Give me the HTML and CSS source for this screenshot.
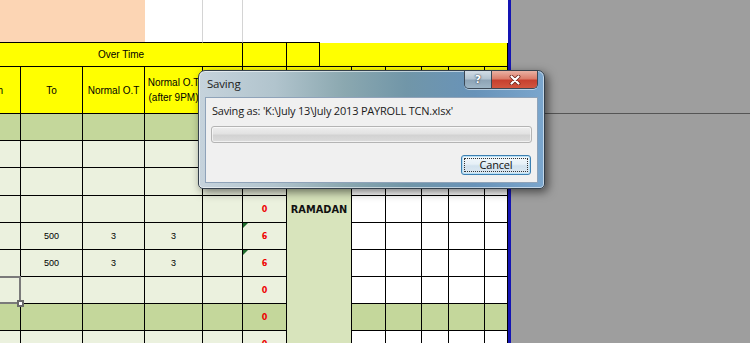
FILE: index.html
```html
<!DOCTYPE html>
<html>
<head>
<meta charset="utf-8">
<title>Saving</title>
<link rel="stylesheet" href="styles.css">
</head>
<body>
<div class="screen">
  <div class="sheet">
    <!-- row A -->
    <div class="c pe s3 nbr"></div>
    <div class="c wh gr"></div>
    <div class="c wh gr"></div>
    <div class="c wh s2 nbr"></div>
    <div class="c wh s6 nb"></div>
    <!-- row B -->
    <div class="c ye s5 ot">Over Time</div>
    <div class="c ye"></div>
    <div class="c ye"></div>
    <div class="c ye s6"></div>
    <!-- row C header -->
    <div class="c ye hd from"><span>From</span></div>
    <div class="c ye hd">To</div>
    <div class="c ye hd">Normal O.T</div>
    <div class="c ye hd two">Normal O.T<br>(after 9PM)</div>
    <div class="c ye hd"></div>
    <div class="c ye hd"></div>
    <div class="c ye hd s2"></div>
    <div class="c ye hd"></div>
    <div class="c ye hd"></div>
    <div class="c ye hd"></div>
    <div class="c ye hd"></div>
    <div class="c ye hd"></div>
    <!-- D1 dark -->
    <div class="c dk"></div><div class="c dk"></div><div class="c dk"></div><div class="c dk"></div><div class="c dk"></div><div class="c dk"></div>
    <div class="c dk s2"></div>
    <div class="c dk"></div><div class="c dk"></div><div class="c dk"></div><div class="c dk"></div><div class="c dk"></div>
    <!-- D2 -->
    <div class="c lt"></div><div class="c lt"></div><div class="c lt"></div><div class="c lt"></div><div class="c lt"></div><div class="c lt"></div>
    <div class="c ra s2 nbb"></div>
    <div class="c wh"></div><div class="c wh"></div><div class="c wh"></div><div class="c wh"></div><div class="c wh"></div>
    <!-- D3 -->
    <div class="c lt"></div><div class="c lt"></div><div class="c lt"></div><div class="c lt"></div><div class="c lt"></div><div class="c lt"></div>
    <div class="c ra s2 nbb"></div>
    <div class="c wh"></div><div class="c wh"></div><div class="c wh"></div><div class="c wh"></div><div class="c wh"></div>
    <!-- D4 -->
    <div class="c lt"></div><div class="c lt"></div><div class="c lt"></div><div class="c lt"></div><div class="c lt"></div>
    <div class="c lt red">0</div>
    <div class="c ra s2 r6 rama">RAMADAN</div>
    <div class="c wh"></div><div class="c wh"></div><div class="c wh"></div><div class="c wh"></div><div class="c wh"></div>
    <!-- D5 -->
    <div class="c lt"></div><div class="c lt">500</div><div class="c lt">3</div><div class="c lt">3</div><div class="c lt"></div>
    <div class="c lt red tri">6</div>
    <div class="c wh"></div><div class="c wh"></div><div class="c wh"></div><div class="c wh"></div><div class="c wh"></div>
    <!-- D6 -->
    <div class="c lt"></div><div class="c lt">500</div><div class="c lt">3</div><div class="c lt">3</div><div class="c lt"></div>
    <div class="c lt red tri">6</div>
    <div class="c wh"></div><div class="c wh"></div><div class="c wh"></div><div class="c wh"></div><div class="c wh"></div>
    <!-- D7 -->
    <div class="c lt sel"></div><div class="c lt"></div><div class="c lt"></div><div class="c lt"></div><div class="c lt"></div>
    <div class="c lt red">0</div>
    <div class="c wh"></div><div class="c wh"></div><div class="c wh"></div><div class="c wh"></div><div class="c wh"></div>
    <!-- D8 dark -->
    <div class="c dk"></div><div class="c dk"></div><div class="c dk"></div><div class="c dk"></div><div class="c dk"></div>
    <div class="c dk red">0</div>
    <div class="c dk"></div><div class="c dk"></div><div class="c dk"></div><div class="c dk"></div><div class="c dk"></div>
    <!-- D9 -->
    <div class="c lt"></div><div class="c lt"></div><div class="c lt"></div><div class="c lt"></div><div class="c lt"></div>
    <div class="c lt red">0</div>
    <div class="c wh"></div><div class="c wh"></div><div class="c wh"></div><div class="c wh"></div><div class="c wh"></div>
  </div>
  <div class="edge"></div>
  <div class="desk"><div class="desk-line"></div></div>

  <div class="dialog">
    <div class="titlebar">
      <span class="title">Saving</span>
      <div class="caption-btns">
        <div class="cb help">?</div>
        <div class="cb close">
          <svg width="12" height="10" viewBox="0 0 12 10">
            <path d="M2.5 1.5 L9.5 8.5 M9.5 1.5 L2.5 8.5" stroke="#6b2418" stroke-width="3.8" stroke-linecap="round" fill="none"/>
            <path d="M2.5 1.5 L9.5 8.5 M9.5 1.5 L2.5 8.5" stroke="#ffffff" stroke-width="2.2" stroke-linecap="round" fill="none"/>
          </svg>
        </div>
      </div>
    </div>
    <div class="client">
      <div class="msg">Saving as: 'K:\July 13\July 2013 PAYROLL TCN.xlsx'</div>
      <div class="progress"></div>
      <div class="actions"><button class="btn"><span class="focus">Cancel</span></button></div>
    </div>
  </div>
</div>
</body>
</html>
```

FILE: styles.css
```css
body {
  margin: 0;
  background: #9e9e9e;
}

.screen {
  position: relative;
  display: flex;
  width: 750px;
  height: 343px;
  overflow: hidden;
}

.sheet {
  flex: none;
  align-self: flex-start;
  width: 508px;
  display: grid;
  grid-template-columns: 21px 62px 62px 58px 40px 44px 33px 32px 34px 36px 27px 36px 23px;
  grid-template-rows: 43px 24px 47px 27px 27px 28px 27px 27px 27px 27px 27px 27px;
  font-family: "Liberation Sans", Arial, sans-serif;
  font-size: 9px;
  color: #000;
  background: #fff;
}

.c {
  box-sizing: border-box;
  border-right: 1px solid #000;
  border-bottom: 1px solid #000;
  display: flex;
  align-items: center;
  justify-content: center;
  text-align: center;
  overflow: hidden;
  white-space: nowrap;
}

.s2 { grid-column: span 2; }
.s3 { grid-column: span 3; }
.s5 { grid-column: span 5; }
.s6 { grid-column: span 6; }
.r6 { grid-row: span 6; }

.nb { border: none; }
.nbr { border-right: none; }
.nbb { border-bottom: none; }
.gr { border-right: 1px solid #d4d4d4; }

.pe { background: #fcd5b4; }
.wh { background: #fff; }
.ye { background: #ffff00; }
.dk { background: #c4d79b; }
.lt { background: #ebf1de; }
.ra { background: #d8e4bc; }

.ot { font-size: 10px; }
.hd { font-size: 10px; line-height: 15px; }
.two { white-space: normal; }

.from {
  justify-content: flex-end;
  padding-right: 17px;
}

.red {
  font-family: "DejaVu Sans", sans-serif;
  font-weight: bold;
  font-size: 8px;
  color: #ee0000;
}

.rama {
  align-items: flex-start;
  padding-top: 8px;
  font-family: "DejaVu Sans", sans-serif;
  font-weight: bold;
  font-size: 9.8px;
  color: #111;
}

.tri { position: relative; }
.tri::before {
  content: "";
  position: absolute;
  left: 0;
  top: 0;
  border-top: 5px solid #1d6b2a;
  border-right: 5px solid transparent;
}

.sel {
  position: relative;
  overflow: visible;
}
.sel::after {
  content: "";
  position: absolute;
  left: -3px;
  top: -1px;
  right: -1px;
  bottom: -1px;
  border: 2px solid #7a7a7a;
}
.sel::before {
  content: "";
  position: absolute;
  right: -4px;
  bottom: -4px;
  width: 3px;
  height: 3px;
  background: #fff;
  border: 2px solid #6a6a6a;
  z-index: 2;
}

.edge {
  flex: none;
  width: 3px;
  background: #1414b4;
}

.desk {
  flex: 1;
  background: #9e9e9e;
}
.desk-line {
  margin-top: 113px;
  height: 1px;
  background: #555;
}

/* dialog */
.dialog {
  position: absolute;
  left: 198px;
  top: 70px;
  width: 347px;
  height: 119px;
  box-sizing: border-box;
  border: 1px solid #34404c;
  border-radius: 7px 7px 5px 5px;
  background: linear-gradient(90deg, #c6d3dc 0%, #b1c4cd 22%, #8ba8b0 42%, #7196a8 60%, #6893b9 80%, #7ba6cd 100%);
  box-shadow: inset 0 0 0 1px rgba(255, 255, 255, 0.55), 3px 3px 10px rgba(0, 0, 0, 0.55);
  font-family: "Open Sans", "Noto Sans", sans-serif;
  font-size: 11px;
  letter-spacing: -0.2px;
  color: #1a1a1a;
}

.titlebar {
  position: relative;
  height: 26px;
  display: flex;
  align-items: center;
  padding-left: 8px;
}

.title {
  font-size: 11.5px;
  color: #1c1c1c;
  line-height: 26px;
}

.caption-btns {
  position: absolute;
  top: 0;
  right: 6px;
  display: flex;
  border: 1px solid #3b4856;
  border-top: none;
  border-radius: 0 0 5px 5px;
  overflow: hidden;
  box-shadow: 0 1px 0 rgba(255, 255, 255, 0.5);
}

.cb {
  height: 17px;
  display: flex;
  align-items: center;
  justify-content: center;
}

.help {
  width: 26px;
  border-right: 1px solid #3b4856;
  background: linear-gradient(180deg, #d3dde6 0%, #b3c3d0 45%, #8ea4b6 55%, #9fb6c6 100%);
  color: #fff;
  font-family: "DejaVu Sans", sans-serif;
  font-weight: bold;
  font-size: 11px;
  letter-spacing: 0;
  text-shadow: 0 0 2px #2e3d4c, 0 0 1px #2e3d4c;
}

.close {
  width: 45px;
  background: linear-gradient(180deg, #eab2a4 0%, #dc7d6a 45%, #c7402f 55%, #d2563f 100%);
}

.client {
  margin: 0 6px;
  height: 86px;
  box-sizing: border-box;
  border: 1px solid #8fa3b9;
  background: #f0f0f0;
  display: flex;
  flex-direction: column;
  padding: 5px 0 7px;
}

.msg {
  padding-left: 6px;
  line-height: 16px;
  height: 16px;
  white-space: nowrap;
}

.progress {
  margin: 7px 5px 0;
  height: 17px;
  box-sizing: border-box;
  border: 1px solid #b4b4b4;
  border-radius: 3px;
  background: linear-gradient(180deg, #eeeeee 0%, #e2e2e2 45%, #d2d2d2 55%, #dcdcdc 100%);
  box-shadow: inset 0 0 0 1px rgba(255, 255, 255, 0.6);
}

.actions {
  margin-top: 12px;
  display: flex;
  justify-content: flex-end;
  padding-right: 6px;
}

.btn {
  width: 70px;
  height: 20px;
  box-sizing: border-box;
  padding: 2px;
  border: 1px solid #3c7fb1;
  border-radius: 3px;
  background: linear-gradient(180deg, #f4f9fc 0%, #e6f0f7 45%, #d2e2ee 55%, #dde9f2 100%);
  box-shadow: inset 0 0 0 1px #b8e0f6;
  font-family: "Open Sans", "Noto Sans", sans-serif;
  font-size: 11px;
  letter-spacing: -0.2px;
  color: #111;
  display: flex;
}

.focus {
  flex: 1;
  border: 1px dotted #333;
  display: flex;
  align-items: center;
  justify-content: center;
  line-height: 12px;
}
```
